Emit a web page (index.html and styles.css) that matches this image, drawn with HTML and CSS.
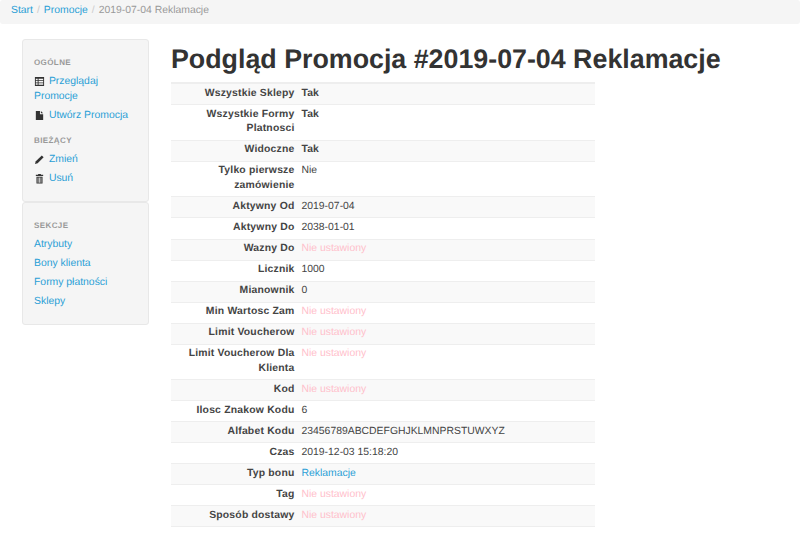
FILE: index.html
```html
<!DOCTYPE html>
<html lang="en">
<head>
    <meta charset="UTF-8">
    <meta name="viewport" content="width=device-width, initial-scale=1.0">
    <title>Podgląd Promocja</title>
    <link rel="stylesheet" href="styles.css">
</head>
<body>
    <ol class="breadcrumb">
        <li><a href="#">Start</a></li>
        <li><a href="#">Promocje</a></li>
        <li class="current">2019-07-04 Reklamacje</li>
    </ol>

    <div class="page">
        <div class="sidebar">
            <div class="well">
                <h4 class="nav-header">Ogólne</h4>
                <a class="nav-link" href="#">
                    <svg class="icon" viewBox="0 0 12 12"><path fill="#333" fill-rule="evenodd" d="M1 1h10v10H1zM2 3v1.500h2V3zm3 0v1.500h5V3zM2 5.500V7h2V5.500zm3 0V7h5V5.500zM2 8v1.500h2V8zm3 0v1.500h5V8z"/></svg>
                    Przeglądaj Promocje
                </a>
                <a class="nav-link" href="#">
                    <svg class="icon" viewBox="0 0 12 12"><path fill="#333" d="M2 1h4.500v3.500H10V11H2zM7.500 1 10 3.500H7.500z"/></svg>
                    Utwórz Promocja
                </a>
                <h4 class="nav-header">Bieżący</h4>
                <a class="nav-link" href="#">
                    <svg class="icon" viewBox="0 0 12 12"><path fill="#333" d="M8.500 1.500 10.500 3.500 4 10 1 11 2 8z"/></svg>
                    Zmień
                </a>
                <a class="nav-link" href="#">
                    <svg class="icon" viewBox="0 0 12 12"><path fill="#333" fill-rule="evenodd" d="M4.500 1h3v1H10v1.200H2V2h2.500zM2.700 4h6.600v7.500H2.700zM4 5v5.500h.8V5zm1.600 0v5.500h.8V5zm1.600 0v5.500H8V5z"/></svg>
                    Usuń
                </a>
            </div>
            <div class="well">
                <h4 class="nav-header">Sekcje</h4>
                <a class="nav-link" href="#">Atrybuty</a>
                <a class="nav-link" href="#">Bony klienta</a>
                <a class="nav-link" href="#">Formy płatności</a>
                <a class="nav-link" href="#">Sklepy</a>
            </div>
        </div>

        <div class="content">
            <h1>Podgląd Promocja #2019-07-04 Reklamacje</h1>
            <table class="detail">
                <tr><th>Wszystkie Sklepy</th><td><b>Tak</b></td></tr>
                <tr><th>Wszystkie Formy Platnosci</th><td><b>Tak</b></td></tr>
                <tr><th>Widoczne</th><td><b>Tak</b></td></tr>
                <tr><th>Tylko pierwsze zamówienie</th><td>Nie</td></tr>
                <tr><th>Aktywny Od</th><td>2019-07-04</td></tr>
                <tr><th>Aktywny Do</th><td>2038-01-01</td></tr>
                <tr><th>Wazny Do</th><td class="empty">Nie ustawiony</td></tr>
                <tr><th>Licznik</th><td>1000</td></tr>
                <tr><th>Mianownik</th><td>0</td></tr>
                <tr><th>Min Wartosc Zam</th><td class="empty">Nie ustawiony</td></tr>
                <tr><th>Limit Voucherow</th><td class="empty">Nie ustawiony</td></tr>
                <tr><th>Limit Voucherow Dla Klienta</th><td class="empty">Nie ustawiony</td></tr>
                <tr><th>Kod</th><td class="empty">Nie ustawiony</td></tr>
                <tr><th>Ilosc Znakow Kodu</th><td>6</td></tr>
                <tr><th>Alfabet Kodu</th><td>23456789ABCDEFGHJKLMNPRSTUWXYZ</td></tr>
                <tr><th>Czas</th><td>2019-12-03 15:18:20</td></tr>
                <tr><th>Typ bonu</th><td><a href="#">Reklamacje</a></td></tr>
                <tr><th>Tag</th><td class="empty">Nie ustawiony</td></tr>
                <tr><th>Sposób dostawy</th><td class="empty">Nie ustawiony</td></tr>
            </table>
        </div>
    </div>
</body>
</html>
```

FILE: styles.css
```css
body {
    font-family: "Liberation Sans", Arial, sans-serif;
    font-size: 10.4px;
    line-height: 14.7px;
    color: #444;
    background-color: #fff;
    margin: 0;
    text-rendering: geometricPrecision;
}

a {
    color: #2a9fd6;
    text-decoration: none;
}

.breadcrumb {
    display: flex;
    list-style: none;
    margin: 0;
    padding: 4px 11px 5.3px;
    background-color: #f5f5f5;
    border-radius: 3px;
}

.breadcrumb li + li::before {
    content: "/";
    color: #ccc;
    padding: 0 4px;
}

.breadcrumb .current {
    color: #999;
}

.page {
    display: flex;
    align-items: flex-start;
    padding: 15px 0 0 22px;
}

.sidebar {
    width: 127px;
    flex-shrink: 0;
}

.well {
    box-sizing: border-box;
    background-color: #f5f5f5;
    border: 1px solid #e8e8e8;
    border-radius: 3px;
    padding: 11px 11px 12px;
}

.nav-header {
    margin: 0;
    padding: 6px 0 4px;
    font-size: 8px;
    line-height: 12px;
    font-weight: bold;
    letter-spacing: 0.4px;
    text-transform: uppercase;
    color: #999;
}

.nav-link {
    display: block;
    padding: 2.2px 0;
}

.nav-link + .nav-header {
    margin-top: 3px;
}

.well + .well {
    padding-top: 11px;
}

.icon {
    width: 11px;
    height: 11px;
    margin-right: 1px;
    vertical-align: -3px;
}

.content {
    margin-left: 22px;
    width: 585px;
}

h1 {
    margin: 4px 0 7px;
    font-size: 26.8px;
    line-height: 32px;
    font-weight: bold;
    color: #333;
    white-space: nowrap;
}

.detail {
    width: 424px;
    border-collapse: collapse;
    border-top: 2px solid #eee;
}

.detail th,
.detail td {
    padding: 2.66px 3.5px;
    border-bottom: 1px solid #eee;
    vertical-align: top;
    text-align: left;
}

.detail th {
    width: 120px;
    text-align: right;
    letter-spacing: 0.2px;
    color: #444;
}

.detail tr:nth-child(odd) {
    background-color: #f9f9f9;
}

.detail b {
    letter-spacing: 0.1px;
}

.detail .empty {
    color: #ffc0cb;
}
```
